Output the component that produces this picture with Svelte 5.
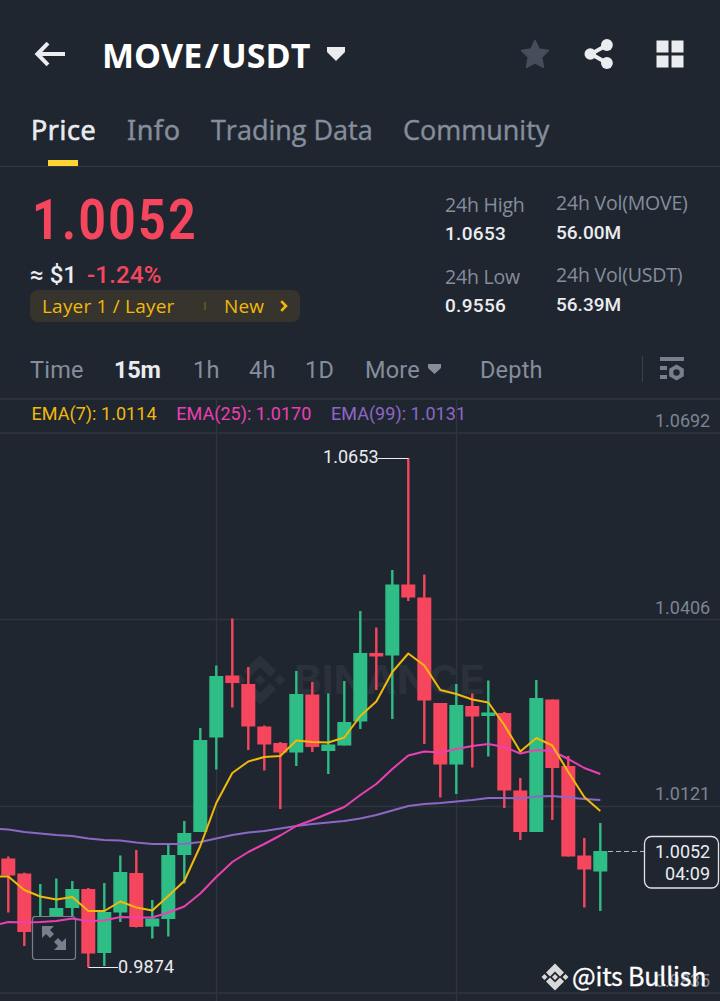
<script>
  // x centre, wick top, body top, body bottom, wick bottom, direction
  const candles = [
    [8, 856.5, 858.5, 875.5, 912.5, 'down'], [24, 872.7, 873.5, 932, 946, 'down'],
    [40, 884, 916, 926, 930, 'up'], [56, 878.5, 908, 916, 918, 'up'],
    [72, 881, 889, 908, 917, 'up'], [88, 888, 889, 953.5, 967.5, 'down'],
    [104, 883, 912, 953, 966, 'up'], [120, 855.5, 872, 912.5, 922, 'up'],
    [136, 850, 873, 927, 927.5, 'down'], [152, 900, 918.5, 926.5, 938.5, 'up'],
    [168, 844.5, 855, 919, 936.5, 'up'], [184, 821, 833, 855, 883.5, 'up'],
    [200, 728, 740, 832, 832, 'up'], [216, 665.5, 676, 737.5, 769.5, 'up'],
    [232, 618.5, 675.5, 683, 707.5, 'down'], [248, 667, 684, 726.5, 750, 'down'],
    [264, 725.5, 726.5, 744.5, 770.5, 'down'], [280, 742, 743, 752.5, 809, 'down'],
    [296, 671, 694, 752.5, 766, 'up'], [312, 682, 694.5, 747, 752, 'down'],
    [328, 693.5, 744.5, 751, 774, 'up'], [344, 681, 722, 745.5, 745.5, 'up'],
    [360, 611, 653, 721.5, 729, 'up'], [376, 627.5, 653, 656.5, 690, 'down'],
    [392, 570, 584.5, 655.5, 719, 'up'], [408, 458, 584.5, 597.5, 601, 'down'],
    [424, 574.5, 597.5, 700.5, 744, 'down'], [440, 703, 703, 764.5, 797.5, 'down'],
    [456, 684, 705, 764.5, 794, 'up'], [472, 693.5, 706, 716.5, 767.5, 'down'],
    [488, 680.5, 712.5, 716, 756.5, 'up'], [504, 712, 713, 790.5, 808, 'down'],
    [520, 778, 790.5, 832, 840, 'down'], [536, 680, 698, 832, 832, 'up'],
    [552, 699.5, 699.5, 768, 820, 'down'], [568, 756, 766, 856.5, 856.5, 'down'],
    [584, 838, 855.5, 869.5, 907.5, 'down'], [600, 823, 851, 871.5, 911, 'up']
  ];
  // one value at the left edge, then one per candle
  const ema7 = [876.5, 876.5, 890, 896.5, 899.5, 897, 911, 911, 901.5, 907.5, 910.5, 896, 881, 846, 803, 773, 761.5, 757, 756, 740.5, 742, 742.5, 737.5, 716, 701.5, 672, 653.5, 665.5, 690, 694, 699.5, 702.5, 725, 751.5, 738, 745.5, 772, 797, 811];
  const ema25 = [924, 922, 922.5, 922, 921, 918.5, 921, 920.5, 917, 917.5, 917.5, 912.5, 906.5, 893.5, 877, 862, 852, 844, 835.5, 826, 820, 813.5, 807, 795, 784, 769, 755.5, 751.5, 752.5, 749, 746, 744, 747, 753.5, 750, 751, 759, 768, 774];
  const ema99 = [829, 829.5, 832, 833.5, 835, 836, 838.5, 840, 840.5, 842.5, 844, 844, 844, 842, 838.5, 835, 832.5, 831, 828.5, 826, 824, 822.5, 821, 818.5, 815, 810.5, 806, 804, 803, 801.5, 800, 798, 798, 798.5, 796.5, 796, 797.5, 799, 800];
  const line = (ys) => ys.map((y, i) => `${i === 0 ? 0 : i * 16 - 7.7},${y}`).join(' ');
</script>

<div class="page">
  <header class="top">
    <svg class="back" width="32" height="26" viewBox="0 0 32 26"><path d="M14 2.2 3.4 13 14 23.8M3.5 13H31" /></svg>
    <h1>MOVE<span>/</span>USDT</h1>
    <svg class="caret" width="18" height="14" viewBox="0 0 18 14"><path d="M0 0h18v5L9 14 0 5Z" /></svg>
    <svg class="star" width="32" height="32" viewBox="0 0 32 32"><path d="m16 2.5 4.1 8.6 9.4 1.3-6.8 6.7 1.8 10.2L16 24.8l-8.500 4.500 1.800-10.200-6.800-6.700 9.400-1.300Z" /></svg>
    <svg class="share" width="30" height="32" viewBox="0 0 30 32"><path d="M23 7 7 16l16 9" /><circle cx="6.300" cy="16" r="5.800" /><circle cx="22.900" cy="7" r="5.900" /><circle cx="22.900" cy="25" r="5.900" /></svg>
    <svg class="apps" width="28" height="28" viewBox="0 0 28 28"><path d="M.5.500h12v12H.5ZM15.500.500h12v12h-12ZM.5 15.500h12v12H.5ZM15.500 15.500h12v12h-12Z" /></svg>
  </header>

  <nav class="tabs">
    <span class="tab active">Price</span>
    <span class="tab info">Info</span>
    <span class="tab">Trading Data</span>
    <span class="tab">Community</span>
  </nav>

  <section class="summary">
    <div class="quote">
      <div class="price"><span>1.0052</span></div>
      <div class="change"><span class="usd">≈ $1</span><span class="pct">-1.24%</span></div>
      <div class="tag">
        <span class="layer">Layer 1 / Layer</span><i></i><span class="new">New</span>
        <svg width="8" height="12" viewBox="0 0 8 12"><path d="m1.200 1.200 4.800 4.800-4.800 4.800" /></svg>
      </div>
    </div>
    <dl class="stats">
      <dt>24h High</dt><dd>1.0653</dd>
      <dt>24h Low</dt><dd>0.9556</dd>
    </dl>
    <dl class="stats volume">
      <dt>24h Vol(MOVE)</dt><dd>56.00M</dd>
      <dt>24h Vol(USDT)</dt><dd>56.39M</dd>
    </dl>
  </section>

  <nav class="frames">
    <span>Time</span>
    <span class="current">15m</span>
    <span>1h</span>
    <span>4h</span>
    <span>1D</span>
    <span class="more"><span>More</span><svg width="13" height="10" viewBox="0 0 13 10"><path d="M0 0h13v4L6.500 10 0 4Z" /></svg></span>
    <span class="depth">Depth</span>
    <span class="settings">
      <svg width="26" height="26" viewBox="0 0 26 26"><path d="M1 1h24v4H1ZM1 10h7v4H1ZM1 19h7v4H1Z" /><path fill-rule="evenodd" d="m17.500 8.500 7.300 4.200v7.600l-7.300 4.200-7.300-4.200v-7.600ZM17.500 13.300a3.200 3.200 0 1 0 0 6.400 3.200 3.200 0 0 0 0-6.400Z" /></svg>
    </span>
  </nav>

  <svg class="chart" width="720" height="601" viewBox="0 400 720 601">
    <g class="grid">
      <path d="M0 433H720M0 619.500H720M0 806.500H720M0 993H720M216.500 400V1001M456.500 400V1001" />
    </g>
    <g class="mark">
      <path d="m260 655 16 16-6 6-10-10-10 10-6-6ZM260 705l16-16-6-6-10 10-10-10-6 6ZM260 674.500l5.500 5.500-5.500 5.500-5.500-5.500ZM240 674.500l5.500 5.500-5.500 5.500-5.500-5.500ZM280 674.500l5.500 5.500-5.500 5.500-5.500-5.500Z" />
      <text x="294" y="694" textLength="191" lengthAdjust="spacingAndGlyphs">BINANCE</text>
    </g>
    {#each candles as [x, high, top, bottom, low, dir]}
      <g class={dir}>
        <rect x={x - 0.9} y={high} width="2.400" height={low - high} />
        <rect x={x - 6.7} y={top} width="14" height={bottom - top} />
      </g>
    {/each}
    <rect class="expand" x="32.500" y="916.500" width="43" height="43" rx="3" />
    <path class="arrows" d="M42 926h12l-4 4 4 4-4 4-4-4-4 4ZM66 950H54l4-4-4-4 4-4 4 4 4-4Z" />
    <polyline class="line e99" points={line(ema99)} />
    <polyline class="line e25" points={line(ema25)} />
    <polyline class="line e7" points={line(ema7)} />

    <text class="c7" x="31.500" y="420" textLength="125">EMA(7): 1.0114</text>
    <text class="c25" x="176.300" y="420" textLength="135">EMA(25): 1.0170</text>
    <text class="c99" x="331" y="420" textLength="135">EMA(99): 1.0131</text>

    <g class="axis">
      <text x="655" y="427" textLength="55.200">1.0692</text>
      <text x="655" y="614" textLength="55.200">1.0406</text>
      <text x="655" y="800" textLength="55.200">1.0121</text>
      <text x="655" y="986.500" textLength="55.200">0.9835</text>
    </g>
    <g class="extreme">
      <path d="M378 458.500h30.500M88.500 967.500H118" />
      <text x="323" y="463" textLength="55.500">1.0653</text>
      <text x="118" y="973" textLength="56">0.9874</text>
    </g>
    <path class="dash" d="M608 851.500h36" />
    <rect class="last" x="644.500" y="836.500" width="74" height="51.500" rx="7" />
    <g class="lasttext">
      <text x="655" y="858" textLength="55.200">1.0052</text>
      <text x="665" y="880" textLength="45">04:09</text>
    </g>
    <g class="credit">
      <path d="m555 963.500 9 9-4 4-5-5-5 5-4-4ZM555 990.500l9-9-4-4-5 5-5-5-4 4ZM555 974l3 3-3 3-3-3ZM544.500 974l3 3-3 3-3-3ZM565.500 974l3 3-3 3-3-3Z" />
      <text x="572" y="986" textLength="134.500">@its Bullish</text>
    </g>
  </svg>
</div>

<style>
  :global(body) { background: #202630; }
  .page { width: 720px; height: 1001px; overflow: hidden; background: #202630; color: #eaecef; font-family: "Open Sans", "Noto Sans", sans-serif; white-space: nowrap; }
  svg { display: block; flex: none; }

  .top { display: flex; align-items: center; height: 108px; padding: 0 35px 0 34px; box-sizing: border-box; fill: #eaecef; }
  .back { fill: none; stroke: #eaecef; stroke-width: 4; }
  h1 { margin: 0 0 0 36px; padding-top: 2px; width: 225px; font-size: 34px; line-height: 48px; font-weight: 700; color: #fff; }
  h1 span { margin: 0 2.400px; }
  .star { margin-left: 174px; fill: #474d5a; stroke: #474d5a; stroke-width: 1.500; stroke-linejoin: round; }
  .share { margin-left: 33px; }
  .share path { fill: none; stroke: #eaecef; stroke-width: 4; }
  .apps { margin-left: 42px; }

  .tabs { display: grid; grid-template-columns: 96px 84px 192px 200px; height: 58px; padding-left: 31px; border-bottom: 1px solid #343943; color: #848e9c; font-size: 27px; line-height: 44px; }
  .tab { -webkit-text-stroke: 0.400px currentColor; }
  .tab.active { color: #eaecef; position: relative; letter-spacing: 0.600px; -webkit-text-stroke-width: 0.700px; }
  .tab.active::after { content: ""; position: absolute; left: 17px; bottom: 0; width: 30px; height: 6px; background: #fcd535; }
  .info { font-family: "Noto Sans", sans-serif; letter-spacing: 0.500px; }

  .summary { display: grid; grid-template-columns: 415px 111px 164px; height: 173px; padding-left: 30px; }
  .price { height: 86px; padding: 21px 0 0 2px; box-sizing: border-box; font: 700 55.500px/66px Roboto, sans-serif; color: #f6465d; }
  .price span { display: inline-block; letter-spacing: 3px; transform: scaleX(0.860); transform-origin: left; }
  .change { display: flex; height: 37px; font: 500 24px/44px Roboto, sans-serif; }
  .usd { width: 57px; }
  .pct { color: #f6465d; letter-spacing: 0.200px; }
  .tag { display: flex; align-items: center; box-sizing: border-box; width: 270px; height: 32px; padding-left: 12px; border-radius: 8px; background: #37342d; color: #f0b90b; font-size: 19px; letter-spacing: 0.200px; }
  .layer { width: 162px; }
  .tag i { width: 2px; height: 8px; margin-right: 18px; background: #635322; }
  .new { width: 56px; }
  .tag svg { fill: none; stroke: #f0b90b; stroke-width: 2.600; }
  .stats { margin: 0; padding-top: 24px; }
  dt { height: 28px; line-height: 28px; color: #848e9c; font-size: 19.500px; letter-spacing: -0.200px; }
  dd { height: 44px; margin: 0; font: 500 19px/30px Roboto, sans-serif; letter-spacing: 0.300px; }
  .volume { padding-top: 22px; }
  .volume dd { letter-spacing: 0; line-height: 31px; }

  .frames { display: grid; grid-template-columns: 84px 79px 56px 56px 60px 115px 162px auto; align-items: center; height: 56px; padding: 2px 0 0 30px; border-bottom: 2px solid #2b303a; color: #848e9c; font: 400 23.500px/28px Roboto, sans-serif; letter-spacing: 0.200px; }
  .current { color: #eaecef; font-weight: 700; letter-spacing: -0.200px; }
  .more { display: flex; align-items: center; gap: 8px; fill: #848e9c; }
  .more svg { margin-bottom: 2px; }
  .settings { border-left: 1px solid #3a404b; padding-left: 16px; margin-bottom: 2px; fill: #76808f; }

  .chart { font: 18px Roboto, sans-serif; }
  .grid path { stroke: #2f343f; stroke-width: 1.300; fill: none; }
  .mark { fill: #2b313b; font: 700 39px Inter, sans-serif; }
  .up { fill: #2ebd85; }
  .down { fill: #f6465d; }
  .line { fill: none; stroke-width: 2; stroke-linejoin: round; }
  .e7 { stroke: #f0b90b; }
  .e25 { stroke: #eb40b5; }
  .e99 { stroke: #8d67c5; }
  .c7 { fill: #f0b90b; }
  .c25 { fill: #eb40b5; }
  .c99 { fill: #8d67c5; }
  .expand { fill: #202630; stroke: #76808f; stroke-width: 1.200; }
  .arrows { fill: #76808f; }
  .axis { fill: #7b8492; }
  .extreme { fill: #eaecef; stroke: none; }
  .extreme path { stroke: #eaecef; stroke-width: 1.200; }
  .dash { stroke: #aeb4bc; stroke-dasharray: 5 3; stroke-width: 1.200; }
  .last { fill: #202630; stroke: #dfe1e5; stroke-width: 1.300; }
  .lasttext { fill: #eaecef; }
  .credit { fill: #d9d9d9; }
  .credit text { font: 400 25px "Noto Sans CJK SC", sans-serif; fill: #fff; stroke: #fff; stroke-width: 0.300; }
</style>
